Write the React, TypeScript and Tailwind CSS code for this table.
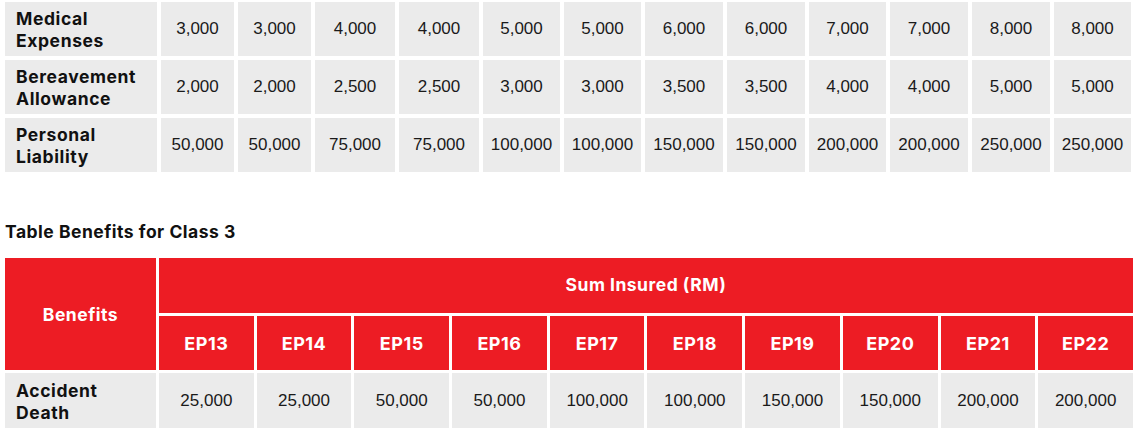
const topRows = [
  {
    label: ["Medical", "Expenses"],
    values: ["3,000", "3,000", "4,000", "4,000", "5,000", "5,000", "6,000", "6,000", "7,000", "7,000", "8,000", "8,000"],
  },
  {
    label: ["Bereavement", "Allowance"],
    values: ["2,000", "2,000", "2,500", "2,500", "3,000", "3,000", "3,500", "3,500", "4,000", "4,000", "5,000", "5,000"],
  },
  {
    label: ["Personal", "Liability"],
    values: ["50,000", "50,000", "75,000", "75,000", "100,000", "100,000", "150,000", "150,000", "200,000", "200,000", "250,000", "250,000"],
  },
];

const plans = ["EP13", "EP14", "EP15", "EP16", "EP17", "EP18", "EP19", "EP20", "EP21", "EP22"];
const deathValues = ["25,000", "25,000", "50,000", "50,000", "100,000", "100,000", "150,000", "150,000", "200,000", "200,000"];

const labelFont = "font-['Inter',sans-serif] font-bold text-[17.5px] leading-[22px] tracking-[0.6px] text-[#111]";
const numFont = "font-['Liberation_Sans',Arial,sans-serif] text-[17px] text-[#1a1a1a]";
const headFont = "font-['Inter',sans-serif] font-bold text-white tracking-[0.5px]";

function LabelCell({ lines }: { lines: string[] }) {
  return (
    <div className={`bg-[#ebebeb] flex flex-col justify-center pl-[11px] pt-[2px] ${labelFont}`}>
      {lines.map((l) => (
        <span key={l}>{l}</span>
      ))}
    </div>
  );
}

function NumCell({ value }: { value: string }) {
  return (
    <div className={`bg-[#ebebeb] flex items-center justify-center ${numFont}`}>
      {value}
    </div>
  );
}

export default function App() {
  return (
    <div className="w-[1140px] h-[430px] bg-white overflow-hidden pl-[5px] pt-[2px]">
      <div className="grid grid-cols-[152px_73px_73px_80px_80px_77px_77px_78px_78px_77px_78px_78px_77px] grid-rows-[54px_54px_54px] gap-[4px]">
        {topRows.map((row) => (
          <div key={row.label[0]} className="contents">
            <LabelCell lines={row.label} />
            {row.values.map((v, i) => (
              <NumCell key={i} value={v} />
            ))}
          </div>
        ))}
      </div>

      <h3 className="mt-[48px] font-['Inter',sans-serif] font-bold text-[17.5px] leading-[24px] text-[#111] tracking-[0.5px]">
        Table Benefits for Class 3
      </h3>

      <div className="mt-[14px] w-[1128px] grid grid-cols-[151px_repeat(10,1fr)] grid-rows-[55px_54px_55px] gap-[3px]">
        <div className={`row-span-2 bg-[#ed1c24] flex items-center justify-center text-[17.5px] pt-[2px] ${headFont}`}>
          Benefits
        </div>
        <div className={`col-span-10 bg-[#ed1c24] flex items-center justify-center text-[17.5px] ${headFont}`}>
          Sum Insured (RM)
        </div>
        {plans.map((p) => (
          <div key={p} className={`bg-[#ed1c24] flex items-center justify-center text-[18px] ${headFont}`}>
            {p}
          </div>
        ))}
        <LabelCell lines={["Accident", "Death"]} />
        {deathValues.map((v, i) => (
          <NumCell key={i} value={v} />
        ))}
      </div>
    </div>
  );
}
